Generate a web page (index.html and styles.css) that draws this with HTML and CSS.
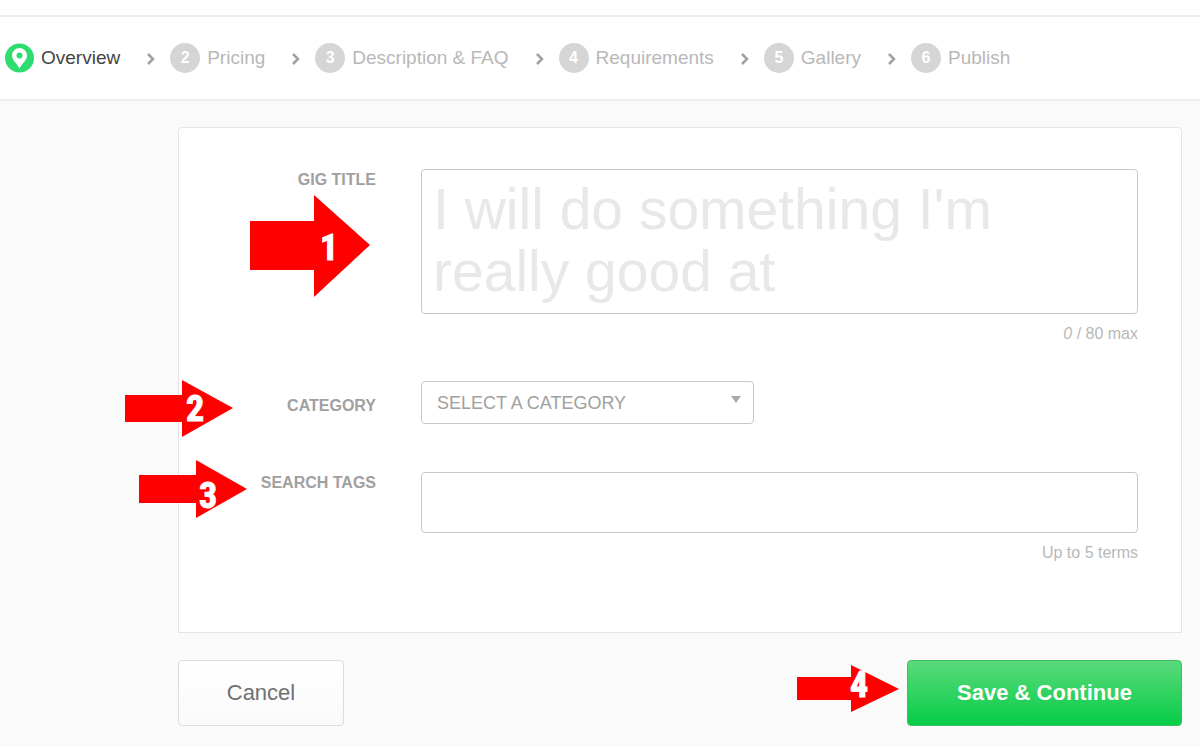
FILE: index.html
```
<!DOCTYPE html>
<html lang="en">
<head>
    <meta charset="UTF-8">
    <meta name="viewport" content="width=device-width, initial-scale=1.0">
    <title>Create a New Gig</title>
    <link rel="stylesheet" href="styles.css">
</head>
<body>
    <nav class="steps-bar">
        <ol class="steps">
            <li class="step active">
                <svg class="pin" viewBox="0 0 30 30" aria-hidden="true">
                    <circle cx="14.500" cy="15" r="14.500" fill="#2fdc70"/>
                    <path fill="#fff" fill-rule="evenodd" d="M14.500 5a7.500 7.500 0 0 0-7.500 7.500C7 17.500 11.500 19.500 14.500 25.500C17.500 19.500 22 17.500 22 12.500A7.500 7.500 0 0 0 14.500 5zM14.500 9.500a3 3 0 1 1 0 6a3 3 0 0 1 0-6z"/>
                </svg>
                <span>Overview</span>
            </li>
            <li class="step">
                <svg class="chevron" viewBox="0 0 8 12" aria-hidden="true"><path d="M1 1l5 5-5 5"/></svg>
                <span class="number">2</span>
                <span>Pricing</span>
            </li>
            <li class="step">
                <svg class="chevron" viewBox="0 0 8 12" aria-hidden="true"><path d="M1 1l5 5-5 5"/></svg>
                <span class="number">3</span>
                <span>Description &amp; FAQ</span>
            </li>
            <li class="step">
                <svg class="chevron" viewBox="0 0 8 12" aria-hidden="true"><path d="M1 1l5 5-5 5"/></svg>
                <span class="number">4</span>
                <span>Requirements</span>
            </li>
            <li class="step">
                <svg class="chevron" viewBox="0 0 8 12" aria-hidden="true"><path d="M1 1l5 5-5 5"/></svg>
                <span class="number">5</span>
                <span>Gallery</span>
            </li>
            <li class="step">
                <svg class="chevron" viewBox="0 0 8 12" aria-hidden="true"><path d="M1 1l5 5-5 5"/></svg>
                <span class="number">6</span>
                <span>Publish</span>
            </li>
        </ol>
    </nav>

    <form class="gig-form">
        <div class="card">
            <div class="row row-title">
                <label class="label" for="gig-title">GIG TITLE</label>
                <div class="field">
                    <textarea class="input title-input" id="gig-title" rows="2" maxlength="80" placeholder="I will do something I'm really good at"></textarea>
                    <p class="hint"><em>0</em> / 80 max</p>
                </div>
                <svg class="arrow arrow-1" width="120" height="102" viewBox="0 0 120 102">
                    <path d="M0 26h64V0l56 50-56 52V75H0z"/>
                    <text x="79" y="65">1</text>
                </svg>
            </div>

            <div class="row row-category">
                <label class="label" for="category">CATEGORY</label>
                <div class="field">
                    <div class="select-wrap">
                        <select class="input category-select" id="category">
                            <option>SELECT A CATEGORY</option>
                        </select>
                    </div>
                </div>
                <svg class="arrow arrow-2" width="108" height="58" viewBox="0 0 108 58">
                    <path d="M0 15h57V0l51 28-51 29V42H0z"/>
                    <text x="70" y="41">2</text>
                </svg>
            </div>

            <div class="row row-tags">
                <label class="label" for="tags">SEARCH TAGS</label>
                <div class="field">
                    <input class="input tags-input" id="tags" type="text">
                    <p class="hint">Up to 5 terms</p>
                </div>
                <svg class="arrow arrow-3" width="108" height="58" viewBox="0 0 108 58">
                    <path d="M0 15h57V0l51 29-51 29V43H0z"/>
                    <text x="69" y="48">3</text>
                </svg>
            </div>
        </div>

        <div class="actions">
            <button class="btn btn-cancel" type="button">Cancel</button>
            <div class="save-wrap">
                <svg class="arrow arrow-4" width="102" height="48" viewBox="0 0 102 48">
                    <path d="M0 12h54V0l48 24-48 23V35H0z"/>
                    <text x="62" y="32">4</text>
                </svg>
                <button class="btn btn-save" type="submit">Save &amp; Continue</button>
            </div>
        </div>
    </form>
</body>
</html>
```
FILE: styles.css
```
* {
    margin: 0;
    padding: 0;
    box-sizing: border-box;
}

body {
    background-color: #fafafa;
    font-family: "Liberation Sans", Arial, sans-serif;
    color: #b8b8b8;
}

/* Steps */
.steps-bar {
    background-color: #fff;
    padding-top: 15px;
    border-bottom: 2px solid #eee;
}

.steps {
    display: flex;
    align-items: center;
    height: 84px;
    padding-left: 5px;
    border-top: 2px solid #eee;
    list-style: none;
}

.step {
    display: flex;
    align-items: center;
    font-size: 19px;
    white-space: nowrap;
}

.step.active {
    color: #444;
}

.pin,
.number {
    width: 30px;
    height: 30px;
    margin-right: 7px;
}

.pin {
    margin-right: 6px;
}

.number {
    border-radius: 50%;
    background-color: #d5d5d5;
    color: #fff;
    font-size: 16px;
    font-weight: bold;
    line-height: 30px;
    text-align: center;
}

.chevron {
    width: 8px;
    height: 12px;
    margin: 2px 15px 0 27px;
    fill: none;
    stroke: #a0a0a0;
    stroke-width: 2.5;
}

/* Form */
.gig-form {
    padding: 26px 18px 20px 178px;
}

.card {
    padding: 41px 43px 69px 0;
    background-color: #fff;
    border: 1px solid #e4e4e4;
    border-radius: 4px 4px 0 0;
}

.row {
    display: flex;
    gap: 45px;
    position: relative;
}

.row-category {
    margin-top: 37px;
}

.row-tags {
    margin-top: 48px;
}

.label {
    width: 197px;
    padding-top: 1px;
    color: #a0a0a0;
    font-size: 16px;
    font-weight: bold;
    line-height: 20px;
    text-align: right;
}

.row-category .label {
    padding-top: 15px;
}

.field {
    flex: 1;
}

.input {
    display: block;
    width: 100%;
    background-color: #fff;
    border: 1px solid #c8c8c8;
    border-radius: 4px;
    font-family: inherit;
    color: #a0a0a0;
    outline: none;
}

.title-input {
    height: 145px;
    padding: 8px 11px;
    font-size: 57px;
    line-height: 62px;
    resize: none;
    overflow: hidden;
}

.title-input::placeholder {
    color: #e8e8e8;
}

.select-wrap {
    position: relative;
    width: 333px;
}

.select-wrap::after {
    content: "";
    position: absolute;
    top: 15px;
    right: 13px;
    border: 5px solid transparent;
    border-top: 7px solid #aaa;
    border-bottom: 0;
    pointer-events: none;
}

.category-select {
    height: 43px;
    padding: 0 30px 0 15px;
    font-size: 18px;
    appearance: none;
}

.tags-input {
    height: 61px;
    padding: 0 15px;
    font-size: 18px;
}

.hint {
    margin-top: 10px;
    font-size: 16px;
    line-height: 20px;
    text-align: right;
}

/* Buttons */
.actions {
    display: flex;
    justify-content: space-between;
    margin-top: 27px;
}

.save-wrap {
    position: relative;
}

.btn {
    display: block;
    height: 66px;
    border-radius: 4px;
    font-family: inherit;
    font-size: 22px;
    cursor: pointer;
}

.btn-cancel {
    width: 166px;
    background: linear-gradient(#fff, #fafafa);
    border: 1px solid #ddd;
    color: #707070;
}

.btn-save {
    width: 275px;
    background: linear-gradient(#5bd97b, #06cd48);
    border: 1px solid #3fbf66;
    color: #fff;
    font-weight: bold;
}

/* Numbered pointers lying over the form */
.arrow {
    position: absolute;
    fill: #f00;
    pointer-events: none;
}

.arrow text {
    fill: #fff;
    stroke: #fff;
    stroke-width: 1;
    font-family: "Roboto Condensed", "Liberation Sans Narrow", "Liberation Sans", sans-serif;
    font-size: 36px;
    font-weight: bold;
    text-anchor: middle;
}

.arrow-1 {
    top: 26px;
    left: 71px;
}

.arrow-2 {
    top: -1px;
    left: -54px;
}

.arrow-3 {
    top: -12px;
    left: -40px;
}

.arrow-4 {
    top: 5px;
    right: 283px;
}
```
